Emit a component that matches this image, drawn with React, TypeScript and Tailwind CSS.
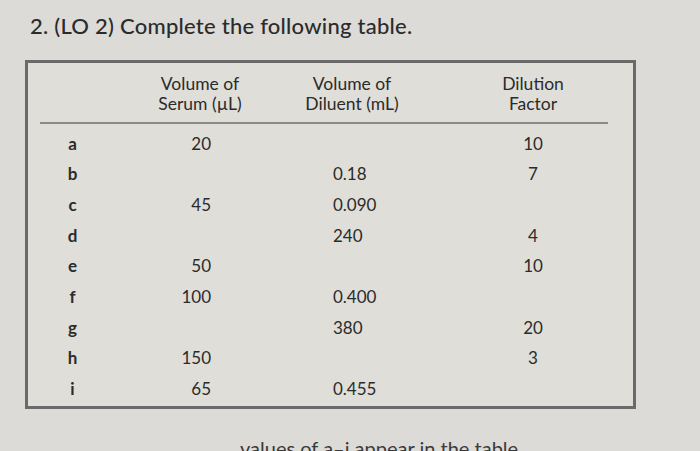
import React from 'react';

type Row = { id: string; serum?: string; diluent?: string; factor?: string };

const rows: Row[] = [
  { id: 'a', serum: '20', factor: '10' },
  { id: 'b', diluent: '0.18', factor: '7' },
  { id: 'c', serum: '45', diluent: '0.090' },
  { id: 'd', diluent: '240', factor: '4' },
  { id: 'e', serum: '50', factor: '10' },
  { id: 'f', serum: '100', diluent: '0.400' },
  { id: 'g', diluent: '380', factor: '20' },
  { id: 'h', serum: '150', factor: '3' },
  { id: 'i', serum: '65', diluent: '0.455' },
];

const App: React.FC = () => {
  return (
    <div
      className="w-[700px] h-[451px] overflow-hidden bg-[#dcdbd7] text-[#2b2b2b]"
      style={{ fontFamily: 'Lato, "Open Sans", sans-serif' }}
    >
      <h1 className="pl-[30px] pt-[12px] text-[22px] leading-[28px] font-medium tracking-[0.25px]">
        2. (LO 2) Complete the following table.
      </h1>

      <div className="ml-[25px] mt-[20px] w-[611px] h-[349px] border-[3px] border-[#6a6a6a] bg-[#dfded9]">
        <div className="ml-[12px] w-[568px] flex pt-[11px] pb-[8px] border-b-2 border-[#8a8a88] text-[17.5px] leading-[20px] text-center">
          <div className="ml-[90px] w-[140px]">
            Volume of
            <br />
            Serum (µL)
          </div>
          <div className="ml-[12px] w-[140px]">
            Volume of
            <br />
            Diluent (mL)
          </div>
          <div className="ml-[41px] w-[140px]">
            Dilution
            <br />
            Factor
          </div>
        </div>

        <div className="ml-[12px] pt-[4px]">
          {rows.map((r) => (
            <div key={r.id} className="flex items-center h-[30.7px] text-[17px]">
              <div className="w-[65px] text-center font-bold">{r.id}</div>
              <div className="w-[106px] text-right">{r.serum ?? ''}</div>
              <div className="ml-[122px] w-[130px] text-left">{r.diluent ?? ''}</div>
              <div className="w-[140px] text-center">{r.factor ?? ''}</div>
            </div>
          ))}
        </div>
      </div>

      <div className="mt-[27px] pl-[240px] text-[20px] leading-[24px] text-[#3a3a3a] whitespace-nowrap">
        values of a–i appear in the table
      </div>
    </div>
  );
};

export default App;
